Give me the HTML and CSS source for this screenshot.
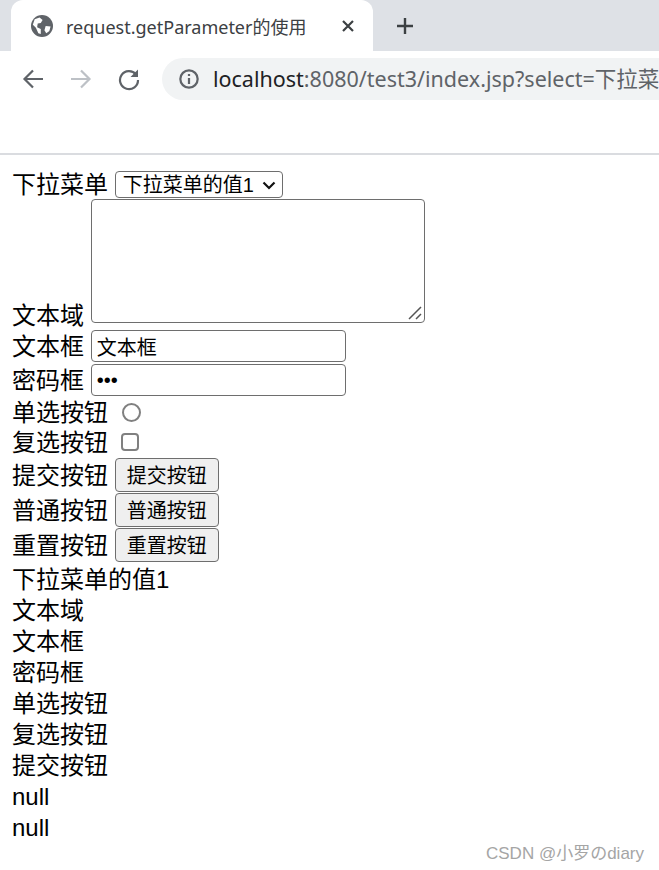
FILE: index.html
```html
<!DOCTYPE html>
<html>
<head>
    <title>request.getParameter的使用</title>
    <link rel="stylesheet" href="styles.css">
</head>
<body>
    <div class="tab-strip">
        <div class="tab">
            <svg class="tab-icon" width="22" height="22" viewBox="0 0 18 18">
                <circle cx="9" cy="9" r="9" fill="#5f6368"/>
                <path d="M3 3.5 L7 2 L9.5 4 L8 6.5 L5.5 7 L5 10 L8 11.5 L8 15.5 L6 15 L4 10.5 L1.5 8 Z" fill="#fff"/>
                <path d="M12 9 L16 9.5 L15 13 L12.5 15 L11 12.5 Z" fill="#fff"/>
            </svg>
            <span class="tab-title">request.getParameter的使用</span>
            <svg class="tab-close" width="14" height="14" viewBox="0 0 14 14">
                <path d="M2 2 L12 12 M12 2 L2 12" stroke="#3c4043" stroke-width="2.2" fill="none"/>
            </svg>
        </div>
        <svg class="new-tab" width="18" height="18" viewBox="0 0 18 18">
            <path d="M9 1 V17 M1 9 H17" stroke="#3c4043" stroke-width="2.4" fill="none"/>
        </svg>
    </div>
    <div class="toolbar">
        <svg class="nav-icon" width="24" height="24" viewBox="0 0 24 24">
            <path d="M22 12 H4 M12 3.5 L3.5 12 L12 20.5" stroke="#5f6368" stroke-width="2.2" fill="none"/>
        </svg>
        <svg class="nav-icon" width="24" height="24" viewBox="0 0 24 24">
            <path d="M2 12 H20 M12 3.5 L20.5 12 L12 20.5" stroke="#bdc1c6" stroke-width="2.2" fill="none"/>
        </svg>
        <svg class="nav-icon" width="24" height="24" viewBox="0 0 24 24">
            <path d="M19 7.5 A9 9 0 1 0 21 13" stroke="#5f6368" stroke-width="2.2" fill="none"/>
            <path d="M21 2.5 V10 H13.5 Z" fill="#5f6368"/>
        </svg>
        <div class="omnibox">
            <svg width="20" height="20" viewBox="0 0 18 18">
                <circle cx="9" cy="9" r="7.8" stroke="#5f6368" stroke-width="2" fill="none"/>
                <path d="M9 8 V13.5 M9 4.5 V6.4" stroke="#5f6368" stroke-width="2" fill="none"/>
            </svg>
            <span class="url"><b>localhost</b>:8080/test3/index.jsp?select=下拉菜</span>
        </div>
    </div>
    <div class="page">
        <form class="fields">
            <div class="row row-select">下拉菜单 <span class="select-wrap"><select><option>下拉菜单的值1</option></select><svg class="select-arrow" width="14" height="9" viewBox="0 0 14 9"><path d="M1.5 1.5 L7 7 L12.5 1.5" stroke="#111" stroke-width="2.2" fill="none"/></svg></span></div>
            <div class="row row-area">文本域 <span class="area-wrap"><textarea></textarea><svg class="area-grip" width="14" height="14" viewBox="0 0 14 14"><path d="M1 13 L13 1 M8 13 L13 8" stroke="#555" stroke-width="1.5" fill="none"/></svg></span></div>
            <div class="row row-input">文本框 <input type="text" value="文本框"></div>
            <div class="row row-input">密码框 <input type="password" value="123"></div>
            <div class="row row-check">单选按钮 <input type="radio"></div>
            <div class="row row-check">复选按钮 <input type="checkbox"></div>
            <div class="row row-btn">提交按钮 <button type="button">提交按钮</button></div>
            <div class="row row-btn">普通按钮 <button type="button">普通按钮</button></div>
            <div class="row row-btn">重置按钮 <button type="button">重置按钮</button></div>
        </form>
        <div class="line">下拉菜单的值1</div>
        <div class="line">文本域</div>
        <div class="line">文本框</div>
        <div class="line">密码框</div>
        <div class="line">单选按钮</div>
        <div class="line">复选按钮</div>
        <div class="line">提交按钮</div>
        <div class="line">null</div>
        <div class="line">null</div>
    </div>
    <div class="watermark">CSDN @小罗のdiary</div>
</body>
</html>
```

FILE: styles.css
```css
body {
    margin: 0;
    height: 870px;
    position: relative;
    overflow: hidden;
    background: #fff;
    font-family: "Liberation Sans", "Noto Sans CJK SC", sans-serif;
    color: #000;
}

.tab-strip {
    height: 51px;
    background: #dee1e6;
    display: flex;
    align-items: center;
}

.tab {
    width: 362px;
    height: 51px;
    margin-left: 11px;
    background: #fff;
    border-radius: 12px 12px 0 0;
    display: flex;
    align-items: center;
    padding: 0 18px 0 20px;
    box-sizing: border-box;
}

.tab-title {
    margin-left: 13px;
    flex: 1;
    font-family: "Noto Sans", "Noto Sans CJK SC", sans-serif;
    font-size: 18px;
    color: #3c4043;
    white-space: nowrap;
}

.new-tab {
    margin-left: 23px;
}

.toolbar {
    height: 56px;
    display: flex;
    align-items: center;
    padding-left: 21px;
    overflow: hidden;
}

.nav-icon {
    margin-right: 24px;
    flex: none;
}

.omnibox {
    height: 42px;
    flex: none;
    margin-left: -3px;
    width: 560px;
    background: #f1f3f4;
    border-radius: 21px;
    display: flex;
    align-items: center;
    padding-left: 17px;
    box-sizing: border-box;
}

.url {
    margin: 0 0 3px 14px;
    font-family: "Noto Sans", "Noto Sans CJK SC", sans-serif;
    font-size: 21.5px;
    color: #5f6368;
    white-space: nowrap;
}

.url b {
    font-weight: normal;
    color: #202124;
}

.page {
    margin-top: 46px;
    border-top: 2px solid #dadce0;
    padding: 15px 0 0 12px;
    font-size: 24px;
}

.fields {
    margin: 0;
    padding-bottom: 2px;
}

.row {
    display: flex;
    white-space: pre;
    line-height: 31px;
}

.row-select {
    height: 29px;
    align-items: center;
}

.select-wrap, .area-wrap {
    position: relative;
    display: flex;
}

.select-arrow {
    position: absolute;
    right: 7px;
    top: 10px;
    pointer-events: none;
}

.area-grip {
    position: absolute;
    right: 3px;
    bottom: 3px;
    pointer-events: none;
}

.row-area {
    height: 130px;
    align-items: flex-end;
    line-height: 27px;
}

.area-wrap {
    margin-bottom: 6px;
}

.row-input {
    height: 34px;
    align-items: center;
}

.row-check {
    height: 30px;
    align-items: center;
}

.row-btn {
    height: 35px;
    align-items: flex-end;
    line-height: 33px;
}

.row-btn button {
    align-self: center;
}

select {
    appearance: none;
    width: 168px;
    height: 27px;
    font: 20px "Liberation Sans", "Noto Sans CJK SC", sans-serif;
    border: 1px solid #6e6e6e;
    border-radius: 4px;
    background: #fff;
    padding: 0 0 0 7px;
    color: #000;
}

textarea {
    width: 334px;
    height: 124px;
    box-sizing: border-box;
    border: 1px solid #6e6e6e;
    border-radius: 4px;
    margin: 0;
    resize: none;
}

.row-input input {
    width: 255px;
    height: 32px;
    box-sizing: border-box;
    border: 1px solid #6e6e6e;
    border-radius: 4px;
    padding: 0 5px;
    margin: 0;
    font: 20px "Liberation Sans", "Noto Sans CJK SC", sans-serif;
}

input[type="radio"], input[type="checkbox"] {
    appearance: none;
    box-sizing: border-box;
    border: 2px solid #808080;
    background: #fff;
}

input[type="radio"] {
    width: 19px;
    height: 19px;
    border-radius: 50%;
    margin: 0 0 0 7px;
}

input[type="checkbox"] {
    width: 18px;
    height: 18px;
    border-radius: 4px;
    margin: 0 0 0 6px;
}

button {
    width: 104px;
    height: 34px;
    padding: 0;
    border: 1px solid #6e6e6e;
    border-radius: 4px;
    background: #efefef;
    font: 20px "Liberation Sans", "Noto Sans CJK SC", sans-serif;
    color: #000;
}

.line {
    height: 31px;
    line-height: 31px;
}

.watermark {
    position: absolute;
    right: 15px;
    top: 839px;
    font-size: 17px;
    color: #a5a5a5;
}
```
